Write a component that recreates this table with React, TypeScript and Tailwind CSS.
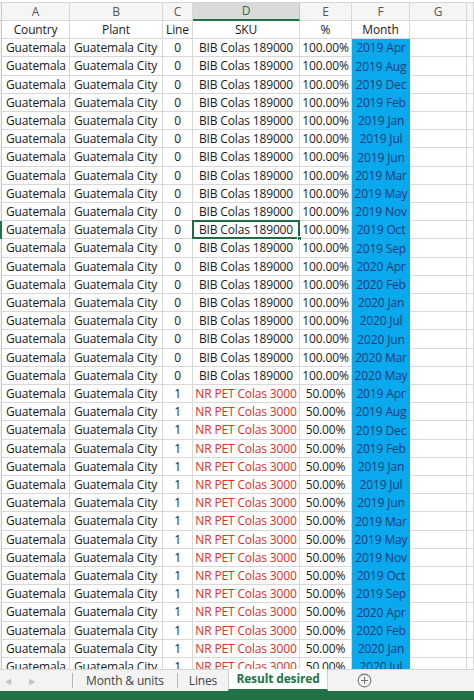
import React from "react";

const monthsAll = [
  "2019 Apr", "2019 Aug", "2019 Dec", "2019 Feb", "2019 Jan", "2019 Jul", "2019 Jun",
  "2019 Mar", "2019 May", "2019 Nov", "2019 Oct", "2019 Sep", "2020 Apr", "2020 Feb",
  "2020 Jan", "2020 Jul", "2020 Jun", "2020 Mar", "2020 May",
];

type Row = { line: string; sku: string; pct: string; month: string; red: boolean };

const rows: Row[] = [
  ...monthsAll.map((m) => ({ line: "0", sku: "BIB Colas 189000", pct: "100.00%", month: m, red: false })),
  ...monthsAll.slice(0, 16).map((m) => ({ line: "1", sku: "NR PET Colas 3000", pct: "50.00%", month: m, red: true })),
];

const SEL = 10;
const ROW_H = 18.2;
const FIRST_TOP = 21;

function rowHeight(k: number) {
  const top = Math.round(FIRST_TOP + ROW_H * k);
  const next = Math.round(FIRST_TOP + ROW_H * (k + 1));
  return next - top;
}

const cell = "shrink-0 border-r border-b border-[#d8d8d8] flex items-center whitespace-nowrap overflow-hidden";

export default function App() {
  return (
    <div
      className="w-[474px] h-[700px] overflow-hidden bg-white flex flex-col text-[12px] tracking-[-0.15px] text-[#1a1a1a]"
      style={{ fontFamily: '"Open Sans", "Noto Sans", sans-serif' }}
    >
      <div className="h-[669px] overflow-hidden flex flex-col">
        <div className="h-[2px] bg-white shrink-0" />
        <div className="flex h-[19px] shrink-0 bg-[#f5f5f5] text-[#555] border-t border-[#d6d6d6]">
          <div className="w-[2px] shrink-0 border-r border-b border-[#c8c8c8]" />
          <div className={`${cell} w-[68px] justify-center border-[#d0d0d0]`}>A</div>
          <div className={`${cell} w-[93px] justify-center border-[#d0d0d0]`}>B</div>
          <div className={`${cell} w-[30px] justify-center border-[#d0d0d0]`}>C</div>
          <div className="shrink-0 w-[107px] flex items-center justify-center bg-[#dadada] border-r border-[#c4c4c4] border-b-2 border-b-[#217346] text-[#217346]">D</div>
          <div className={`${cell} w-[52px] justify-center border-[#d0d0d0]`}>E</div>
          <div className={`${cell} w-[58px] justify-center border-[#d0d0d0]`}>F</div>
          <div className={`${cell} w-[57px] justify-center border-[#d0d0d0]`}>G</div>
          <div className={`${cell} flex-1 border-[#d0d0d0]`} />
        </div>
        <div className="flex shrink-0" style={{ height: rowHeight(0) }}>
          <div className="w-[2px] shrink-0 bg-[#f3f3f3] border-r border-[#c8c8c8]" />
          <div className={`${cell} w-[68px] justify-center`}>Country</div>
          <div className={`${cell} w-[93px] justify-center`}>Plant</div>
          <div className={`${cell} w-[30px] justify-center`}>Line</div>
          <div className={`${cell} w-[107px] justify-center`}>SKU</div>
          <div className={`${cell} w-[52px] justify-center`}>%</div>
          <div className={`${cell} w-[58px] justify-center`}>Month</div>
          <div className={`${cell} w-[57px]`} />
          <div className={`${cell} flex-1`} />
        </div>
        {rows.map((r, i) => {
          const sel = i === SEL;
          return (
            <div key={i} className="flex shrink-0" style={{ height: rowHeight(i + 1) }}>
              <div
                className={`w-[2px] shrink-0 ${sel ? "bg-[#217346]" : "bg-[#f3f3f3] border-r border-[#c8c8c8]"}`}
              />
              <div className={`${cell} w-[68px] pl-[4px]`}>Guatemala</div>
              <div className={`${cell} w-[93px] pl-[4px]`}>Guatemala City</div>
              <div className={`${cell} w-[30px] justify-center`}>{r.line}</div>
              <div className={`${cell} w-[107px] justify-center relative overflow-visible ${r.red ? "text-[#e0301e]" : ""}`}>
                {r.sku}
                {sel && (
                  <>
                    <div className="absolute left-[-1px] top-[-1px] right-[-1px] bottom-[-1px] border-2 border-[#1e6b41]" />
                    <div className="absolute right-[-3px] bottom-[-3px] w-[5px] h-[5px] bg-[#1e6b41] border border-white" />
                  </>
                )}
              </div>
              <div className={`${cell} w-[52px] justify-center`}>{r.pct}</div>
              <div className="shrink-0 w-[58px] flex items-center justify-center bg-[#0aa8ec] text-[#143a78] whitespace-nowrap overflow-hidden">
                {r.month}
              </div>
              <div className={`${cell} w-[57px]`} />
              <div className={`${cell} flex-1`} />
            </div>
          );
        })}
      </div>

      <div className="h-[22px] shrink-0 flex items-stretch bg-[#f3f3f3] border-t border-[#d4d4d4] text-[12px] text-[#444]">
        <div className="w-[72px] shrink-0 flex items-center gap-[18px] pl-[5px] text-[#c0c0c0] text-[8px]">
          <span>◀</span>
          <span>▶</span>
        </div>
        <div className="w-px my-[3px] bg-[#b8b8b8]" />
        <div className="w-[104px] flex items-center justify-center">Month &amp; units</div>
        <div className="w-px my-[3px] bg-[#b8b8b8]" />
        <div className="w-[50px] flex items-center justify-center">Lines</div>
        <div className="w-[100px] -mt-[1px] flex items-center justify-center bg-white border-x border-[#cfcfcf] border-b-2 border-b-[#217346] font-bold text-[#217346]">
          Result desired
        </div>
        <div className="w-[72px] flex items-center justify-center">
          <svg width="15" height="15" viewBox="0 0 16 16" fill="none" stroke="#707070" strokeWidth="1.1">
            <circle cx="8" cy="8" r="6.8" />
            <path d="M8 4.3v7.4M4.3 8h7.4" />
          </svg>
        </div>
        <div className="flex-1" />
      </div>
      <div className="flex-1 bg-[#217346]" />
    </div>
  );
}
